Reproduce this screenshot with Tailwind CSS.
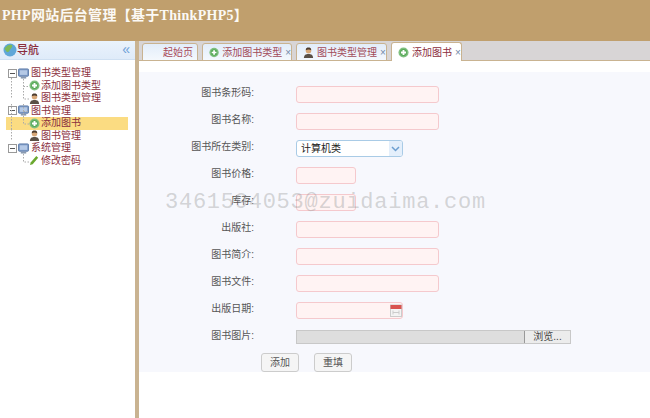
<!doctype html>
<html><head><meta charset="utf-8"><script src="https://cdn.jsdelivr.net/npm/@tailwindcss/browser@4"></script></head>
<body class="w-[650px] h-[418px] overflow-hidden bg-white relative font-['Liberation_Sans','Noto_Sans_CJK_SC',sans-serif] text-[10px]">
<svg width="0" height="0" class="absolute"><defs>
<symbol id="add" viewBox="0 0 12 12"><circle cx="6" cy="6" r="5.500" fill="#7fbf7f"/><circle cx="6" cy="6" r="3.800" fill="#57a957"/><path d="M6 3.200v5.600M3.200 6h5.600" stroke="#fff" stroke-width="2"/></symbol>
<symbol id="user" viewBox="0 0 12 12"><path d="M1 12c0-3.500 2-4.500 5-4.500s5 1 5 4.500z" fill="#5a5046"/><circle cx="6" cy="4" r="3" fill="#d8a878"/><path d="M3 3.500C3 1 4.500 .5 6 .5s3 .5 3 3c-1.500-1-4.500-1-6 0z" fill="#4b3a2c"/></symbol>
<symbol id="pc" viewBox="0 0 12 12"><rect x=".5" y="1" width="11" height="8" rx="1" fill="#7f9cc6" stroke="#5b79a8"/><rect x="2" y="2.500" width="8" height="5" fill="#b5c9e6"/><rect x="3" y="9.500" width="6" height="2" fill="#8a9ab0"/></symbol>
<symbol id="minus" viewBox="0 0 9 9"><rect x=".5" y=".5" width="8" height="8" fill="#fff" stroke="#999"/><path d="M2 4.500h5" stroke="#555"/></symbol>
</defs></svg>

<header class="h-[41px] bg-[#c09f6d] flex items-center pl-[2px] pb-[9px] text-[14px] leading-none font-bold text-white/95 font-['Liberation_Serif','Noto_Sans_CJK_SC',serif] tracking-[0.3px]">PHP网站后台管理【基于ThinkPHP5】</header>

<div class="flex h-[377px]">
  <aside class="w-[139px] border-r-[4px] border-[#c9b391] shrink-0">
    <div class="h-[19px] bg-gradient-to-b from-[#eaf3fc] to-[#dfebf9] flex items-center justify-between pl-[3px] pr-[5px] border-b border-[#cfe0f2]">
      <div class="flex items-center text-[#8b2d3c] font-medium text-[11px]"><svg width="14" height="14" viewBox="0 0 14 14"><circle cx="7" cy="7" r="6.500" fill="#5fa7d8"/><path d="M2 5c2-3 5-4 7-3 1 2-1 3-2 5s-3 3-4 1-2-2-1-3z" fill="#7dba5a"/></svg><span>导航</span></div>
      <span class="text-[#6ea0d8] text-[14px] leading-none pb-[3px]">«</span>
    </div>
    <div class="relative">
    <ul class="pt-[7px] pl-[8px] text-[#8b3040] leading-[12.500px]">
      <li class="flex items-center gap-[1px] h-[12.500px]"><svg width="9" height="9"><use href="#minus"/></svg><svg width="11" height="11"><use href="#pc"/></svg><span class="ml-[1px]">图书类型管理</span></li>
      <li class="flex items-center h-[12.500px] pl-[21px] gap-[1px]"><svg width="11" height="11"><use href="#add"/></svg><span>添加图书类型</span></li>
      <li class="flex items-center h-[12.500px] pl-[21px] gap-[1px]"><svg width="11" height="11"><use href="#user"/></svg><span>图书类型管理</span></li>
      <li class="flex items-center gap-[1px] h-[12.500px]"><svg width="9" height="9"><use href="#minus"/></svg><svg width="11" height="11"><use href="#pc"/></svg><span class="ml-[1px]">图书管理</span></li>
      <li class="flex items-center h-[12.500px] pl-[21px] gap-[1px] bg-[#fbdc82] ml-[-2px] mr-[7px]"><svg width="11" height="11" class="ml-[2px]"><use href="#add"/></svg><span>添加图书</span></li>
      <li class="flex items-center h-[12.500px] pl-[21px] gap-[1px]"><svg width="11" height="11"><use href="#user"/></svg><span>图书管理</span></li>
      <li class="flex items-center gap-[1px] h-[12.500px]"><svg width="9" height="9"><use href="#minus"/></svg><svg width="11" height="11"><use href="#pc"/></svg><span class="ml-[1px]">系统管理</span></li>
      <li class="flex items-center h-[12.500px] pl-[21px] gap-[1px]"><svg width="11" height="11" viewBox="0 0 12 12"><path d="M1 11l1-3 6-7 2 2-6 7z" fill="#6aa82e"/></svg><span>修改密码</span></li>
    </ul>
    <svg class="absolute left-0 top-[1px]" width="40" height="110" fill="none" stroke="#aaa" stroke-dasharray="1.500 1.500"><path d="M11.500 17v21M11.500 43v25M11.500 68v12"/><path d="M23.500 18v20H29M23.500 25.500H29M23.500 43v20H29M23.500 50.500H29M23.500 93v8H29"/></svg>
    </div>
  </aside>
  <main class="flex-1 flex flex-col min-w-0">
    <div class="h-[20px] bg-[#d8d5d6] border-b border-[#c9b391] flex items-end pl-[3px] gap-[4px] text-[#a24a58] shrink-0 whitespace-nowrap">
      <div class="w-[56px] h-[18px] -mb-px rounded-t-[3px] border border-[#c9b391] bg-gradient-to-b from-[#e2edfa] to-[#f4f8fd] flex items-center justify-end pr-[4px] text-[#a84858]">起始页</div>
      <div class="w-[90px] h-[18px] -mb-px rounded-t-[3px] border border-[#c9b391] bg-gradient-to-b from-[#e2edfa] to-[#f4f8fd] flex items-center pl-[6px] gap-[2px]"><svg width="11" height="11"><use href="#add"/></svg><span class="ml-[1px]">添加图书类型</span><span class="ml-[1px] text-[#7389a8]">×</span></div>
      <div class="w-[91px] h-[18px] -mb-px rounded-t-[3px] border border-[#c9b391] bg-gradient-to-b from-[#e2edfa] to-[#f4f8fd] flex items-center pl-[6px] gap-[2px]"><svg width="11" height="11"><use href="#user"/></svg><span class="ml-[1px]">图书类型管理</span><span class="ml-[1px] text-[#7389a8]">×</span></div>
      <div class="w-[71px] h-[19px] -mb-px rounded-t-[3px] border border-b-0 border-[#c9b391] bg-white flex items-center pl-[6px] gap-[2px] text-[#8b2d3c]"><svg width="11" height="11"><use href="#add"/></svg><span class="ml-[1px]">添加图书</span><span class="ml-[1px] text-[#7389a8]">×</span></div>
    </div>
    <div class="h-[11px] shrink-0"></div>
    <form class="h-[300px] bg-[#f7f8fd] pt-[9px] text-[#555]">
      <div class="flex items-center h-[27px]"><label class="w-[115px] text-right pb-[5px]">图书条形码:</label><div class="ml-[42px] w-[143px] h-[17px] rounded-[3px] border border-[#f5c9cd] bg-[#fff3f3]"></div></div>
      <div class="flex items-center h-[27px]"><label class="w-[115px] text-right pb-[5px]">图书名称:</label><div class="ml-[42px] w-[143px] h-[17px] rounded-[3px] border border-[#f5c9cd] bg-[#fff3f3]"></div></div>
      <div class="flex items-center h-[27px]"><label class="w-[115px] text-right pb-[5px]">图书所在类别:</label><div class="ml-[42px] w-[107px] h-[17px] rounded-[3px] border border-[#a9cbe6] bg-white flex items-center justify-between pl-[4px] text-[#222] text-[10px] overflow-hidden">计算机类<span class="w-[13px] h-full bg-[#e4effb] flex items-center justify-center"><svg width="9" height="9" viewBox="0 0 9 9"><path d="M1 3l3.500 3.500L8 3" fill="none" stroke="#6d9fd0" stroke-width="1.500"/></svg></span></div></div>
      <div class="flex items-center h-[27px]"><label class="w-[115px] text-right pb-[5px]">图书价格:</label><div class="ml-[42px] w-[60px] h-[17px] rounded-[3px] border border-[#f5c9cd] bg-[#fff3f3]"></div></div>
      <div class="flex items-center h-[27px]"><label class="w-[115px] text-right pb-[5px]">库存:</label><div class="ml-[42px] w-[60px] h-[17px] rounded-[3px] border border-[#f5c9cd] bg-[#fff3f3]"></div></div>
      <div class="flex items-center h-[27px]"><label class="w-[115px] text-right pb-[5px]">出版社:</label><div class="ml-[42px] w-[143px] h-[17px] rounded-[3px] border border-[#f5c9cd] bg-[#fff3f3]"></div></div>
      <div class="flex items-center h-[27px]"><label class="w-[115px] text-right pb-[5px]">图书简介:</label><div class="ml-[42px] w-[143px] h-[17px] rounded-[3px] border border-[#f5c9cd] bg-[#fff3f3]"></div></div>
      <div class="flex items-center h-[27px]"><label class="w-[115px] text-right pb-[5px]">图书文件:</label><div class="ml-[42px] w-[143px] h-[17px] rounded-[3px] border border-[#f5c9cd] bg-[#fff3f3]"></div></div>
      <div class="flex items-center h-[27px]"><label class="w-[115px] text-right pb-[5px]">出版日期:</label><div class="ml-[42px] w-[107px] h-[17px] rounded-[3px] border border-[#f5c9cd] bg-[#fff3f3] flex items-center justify-end"><svg width="12" height="13" viewBox="0 0 12 13"><rect x=".5" y="1" width="11" height="11.500" fill="#f4f4f4" stroke="#ccc"/><rect x=".5" y="1" width="11" height="4" fill="#d9534f"/><path d="M3 6.500v4M9 6.500v4M3 8.500h6" stroke="#ccc"/></svg></div></div>
      <div class="flex items-center h-[26px]"><label class="w-[115px] text-right pb-[4px]">图书图片:</label><div class="ml-[42px] w-[275px] h-[14px] bg-[#dedede] border border-[#c8c8c8] flex justify-end"><span class="w-[46px] h-full bg-[#ececec] border-l border-[#999] text-center text-[10px] leading-[12px] text-[#444]">浏览...</span></div></div>
      <div class="flex gap-[15px] pl-[122px] pt-[3px]">
        <button type="button" class="w-[38px] h-[19px] rounded-[3px] border border-[#ccc] bg-[#f5f5f5] text-[10px] text-[#555]">添加</button>
        <button type="button" class="w-[38px] h-[19px] rounded-[3px] border border-[#ccc] bg-[#f5f5f5] text-[10px] text-[#555]">重填</button>
      </div>
    </form>
  </main>
</div>
<div class="absolute left-[165px] top-[190px] text-[22px] leading-[26px] text-[#999]/40 font-['Liberation_Mono',monospace] tracking-[0.75px] whitespace-nowrap">3461594053@zuidaima.com</div>
</body></html>
